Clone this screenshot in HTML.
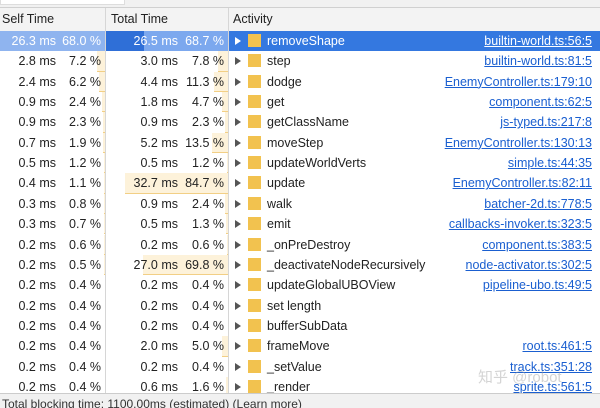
<!DOCTYPE html><html><head><style>
body{margin:0;width:600px;height:403px;overflow:hidden;background:#fff;font-family:"Liberation Sans",sans-serif;font-size:12.5px;color:#222;position:relative}
.top{position:absolute;left:0;top:0;width:600px;height:7px;background:#f1f1f1;border-bottom:1px solid #d0d0d0}
.top i{position:absolute;left:0;top:0;width:123px;height:4px;background:#fff;border:1px solid #ddd;border-top:0}
.hdr{position:absolute;top:8px;left:0;width:600px;height:23px;background:#f3f3f3;border-bottom:1px solid #d6d6d6}
.hdr span{position:absolute;top:4px}
.vl{position:absolute;top:8px;bottom:0;width:1px;background:#d6d6d6}
.row{position:absolute;left:0;width:600px;height:20.35px}
.c{position:absolute;top:0;height:100%}
.bar{position:absolute;right:0;top:0;height:100%;background:#fdf2da;border-bottom:1px solid #f2cf85;box-sizing:border-box}
.t{position:absolute;top:3px;text-align:right;white-space:nowrap}
.tri{position:absolute;left:235px;top:6px;width:0;height:0;border-left:6px solid #555;border-top:4px solid transparent;border-bottom:4px solid transparent}
.sq{position:absolute;left:248px;top:3px;width:13px;height:13px;background:#f2c24f}
.nm{position:absolute;left:267px;top:3px}
.lk{position:absolute;right:8px;top:3px;color:#1a5fd0;text-decoration:underline}
.status{position:absolute;left:0;top:393px;width:600px;height:10px;background:#f1f1f1;border-top:1px solid #ccc;font-size:12px;line-height:12px;padding-top:4px;padding-left:2px;color:#333;overflow:hidden;white-space:nowrap}
</style></head><body>
<div class="top"><i></i></div>
<div class="hdr"><span style="left:2px">Self Time</span><span style="left:111px">Total Time</span><span style="left:233px">Activity</span></div>
<div id="rows"></div>
<div class="vl" style="left:105px"></div><div class="vl" style="left:228px"></div>
<div class="status">Total blocking time: 1100.00ms (estimated) (Learn more)</div>
<script>
var d=[["26.3 ms","68.0","26.5 ms","68.7","removeShape","builtin-world.ts:56:5"],
["2.8 ms","7.2","3.0 ms","7.8","step","builtin-world.ts:81:5"],
["2.4 ms","6.2","4.4 ms","11.3","dodge","EnemyController.ts:179:10"],
["0.9 ms","2.4","1.8 ms","4.7","get","component.ts:62:5"],
["0.9 ms","2.3","0.9 ms","2.3","getClassName","js-typed.ts:217:8"],
["0.7 ms","1.9","5.2 ms","13.5","moveStep","EnemyController.ts:130:13"],
["0.5 ms","1.2","0.5 ms","1.2","updateWorldVerts","simple.ts:44:35"],
["0.4 ms","1.1","32.7 ms","84.7","update","EnemyController.ts:82:11"],
["0.3 ms","0.8","0.9 ms","2.4","walk","batcher-2d.ts:778:5"],
["0.3 ms","0.7","0.5 ms","1.3","emit","callbacks-invoker.ts:323:5"],
["0.2 ms","0.6","0.2 ms","0.6","_onPreDestroy","component.ts:383:5"],
["0.2 ms","0.5","27.0 ms","69.8","_deactivateNodeRecursively","node-activator.ts:302:5"],
["0.2 ms","0.4","0.2 ms","0.4","updateGlobalUBOView","pipeline-ubo.ts:49:5"],
["0.2 ms","0.4","0.2 ms","0.4","set length",""],
["0.2 ms","0.4","0.2 ms","0.4","bufferSubData",""],
["0.2 ms","0.4","2.0 ms","5.0","frameMove","root.ts:461:5"],
["0.2 ms","0.4","0.2 ms","0.4","_setValue","track.ts:351:28"],
["0.2 ms","0.4","0.6 ms","1.6","_render","sprite.ts:561:5"]];
var h="";d.forEach(function(r,i){var y=31+i*20.35,s=i==0;
h+='<div class="row" style="top:'+y+'px'+(s?';color:#fff':'')+'">';
if(s){h+='<div class="c" style="left:0;width:105px;background:#8fb4ef"></div><div class="c" style="left:106px;width:122px;background:#2f6fd7"></div><div class="c" style="left:144px;width:84px;background:#7ca8ee"></div><div class="c" style="left:229px;width:371px;background:#3478e0"></div>';}
else{h+='<div class="c" style="left:0;width:105px"><div class="bar" style="width:'+(r[1]*1.05)+'px"></div></div><div class="c" style="left:106px;width:122px"><div class="bar" style="width:'+(r[3]*1.22)+'px"></div></div>';}
h+='<div class="t" style="right:544px">'+r[0]+'</div><div class="t" style="right:499px">'+r[1]+' %</div><div class="t" style="right:422px">'+r[2]+'</div><div class="t" style="right:376px">'+r[3]+' %</div>';
h+='<div class="tri"'+(s?' style="border-left-color:#fff"':'')+'></div><div class="sq"></div><div class="nm">'+r[4]+'</div>';
if(r[5])h+='<div class="lk"'+(s?' style="color:#fff"':'')+'>'+r[5]+'</div>';
h+='</div>';});
document.getElementById("rows").innerHTML=h;
</script>
<div style="position:absolute;left:478px;top:366px;color:rgba(160,160,160,.45);font-family:'Liberation Sans','Noto Sans CJK SC',sans-serif;font-size:15px">知乎 @robot</div>
</body></html>
